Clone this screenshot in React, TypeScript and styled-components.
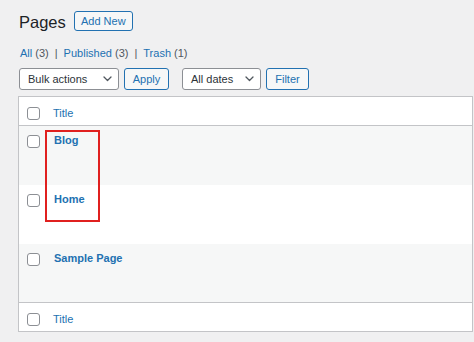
import React from 'react';
import styled, { createGlobalStyle } from 'styled-components';

const GlobalStyle = createGlobalStyle`
  html, body {
    margin: 0;
    padding: 0;
    background: #f0f0f1;
    height: 342px;
    overflow: hidden;
  }
  body {
    font-family: "Liberation Sans", Arial, sans-serif;
    color: #1d2327;
  }
`;

const pages = ['Blog', 'Home', 'Sample Page'];

const Chevron: React.FC = () => (
  <svg width="9" height="6" viewBox="0 0 9 6" fill="none">
    <polyline points="1,1 4.5,4.5 8,1" stroke="#50575e" strokeWidth="1.3" strokeLinecap="round" strokeLinejoin="round" />
  </svg>
);

const App: React.FC = () => {
  return (
    <Wrap>
      <GlobalStyle />
      <HeadingRow>
        <Heading>Pages</Heading>
        <OutlineButton $width={59} $height={20}>Add New</OutlineButton>
      </HeadingRow>

      <FilterLinks>
        <FilterLink>All</FilterLink> <Count>(3)</Count>
        <Sep>|</Sep>
        <FilterLink>Published</FilterLink> <Count>(3)</Count>
        <Sep>|</Sep>
        <FilterLink>Trash</FilterLink> <Count>(1)</Count>
      </FilterLinks>

      <TableNav>
        <Select $width={100}>
          <span>Bulk actions</span>
          <Chevron />
        </Select>
        <OutlineButton $width={45}>Apply</OutlineButton>
        <Select $width={79} $gapLeft={8}>
          <span>All dates</span>
          <Chevron />
        </Select>
        <OutlineButton $width={43}>Filter</OutlineButton>
      </TableNav>

      <Table>
        <HeadRow>
          <CheckCell>
            <Checkbox />
          </CheckCell>
          <ColumnLabel>Title</ColumnLabel>
        </HeadRow>

        {pages.map((title, i) => (
          <BodyRow key={title} $alt={i % 2 === 0} $last={i === pages.length - 1}>
            <CheckCell>
              <Checkbox />
            </CheckCell>
            <RowTitle>{title}</RowTitle>
          </BodyRow>
        ))}

        <FootRow>
          <CheckCell>
            <Checkbox />
          </CheckCell>
          <ColumnLabel>Title</ColumnLabel>
        </FootRow>

        <Highlight />
      </Table>
    </Wrap>
  );
};

const Wrap = styled.div`
  padding: 11px 1px 0 18px;
`;

const HeadingRow = styled.div`
  display: flex;
  align-items: center;
  gap: 8px;
  height: 20px;
`;

const Heading = styled.h1`
  margin: 0 0 0 1px;
  font-size: 16.5px;
  font-weight: 400;
  line-height: 20px;
  color: #1d2327;
  position: relative;
  top: 1px;
`;

const OutlineButton = styled.button<{ $width: number; $height?: number }>`
  box-sizing: border-box;
  height: ${(p) => p.$height || 22}px;
  width: ${(p) => p.$width}px;
  padding: 0;
  border: 1px solid #2271b1;
  border-radius: 3px;
  background: #f6f7f7;
  color: #2271b1;
  font-family: "Liberation Sans", Arial, sans-serif;
  font-size: 11px;
  line-height: 1;
  display: inline-flex;
  align-items: center;
  justify-content: center;
`;

const FilterLinks = styled.div`
  margin: 14px 0 0 2px;
  font-size: 11px;
  line-height: 16px;
  color: #50575e;
  white-space: pre;
`;

const FilterLink = styled.span`
  color: #2271b1;
`;

const Count = styled.span`
  color: #50575e;
`;

const Sep = styled.span`
  color: #50575e;
  margin: 0 6px;
`;

const TableNav = styled.div`
  display: flex;
  align-items: center;
  gap: 5px;
  height: 22px;
  margin-top: 7px;
  padding-left: 1px;
`;

const Select = styled.div<{ $width: number; $gapLeft?: number }>`
  box-sizing: border-box;
  width: ${(p) => p.$width}px;
  height: 22px;
  margin-left: ${(p) => p.$gapLeft || 0}px;
  padding: 0 6px 0 8px;
  display: flex;
  align-items: center;
  justify-content: space-between;
  background: #fff;
  border: 1px solid #8c8f94;
  border-radius: 3px;
  font-size: 11px;
  color: #2c3338;
`;

const Table = styled.div`
  position: relative;
  margin-top: 6px;
  background: #fff;
  border: 1px solid #c3c4c7;
`;

const HeadRow = styled.div`
  display: flex;
  align-items: flex-start;
  height: 29px;
  padding-top: 10px;
  box-sizing: border-box;
  border-bottom: 1px solid #c3c4c7;
`;

const FootRow = styled(HeadRow)`
  border-bottom: none;
  border-top: 1px solid #c3c4c7;
  height: 29px;
`;

const BodyRow = styled.div<{ $alt: boolean; $last: boolean }>`
  display: flex;
  align-items: flex-start;
  box-sizing: border-box;
  height: ${(p) => (p.$last ? 58 : 59)}px;
  padding-top: 9px;
  background: ${(p) => (p.$alt ? '#f6f7f7' : '#fff')};
`;

const CheckCell = styled.div`
  width: 35px;
  padding-left: 8px;
  box-sizing: border-box;
  flex-shrink: 0;
`;

const Checkbox = styled.span`
  display: block;
  width: 13px;
  height: 13px;
  box-sizing: border-box;
  border: 1px solid #8c8f94;
  border-radius: 3px;
  background: #fff;
`;

const ColumnLabel = styled.span`
  font-size: 11px;
  line-height: 13px;
  color: #2271b1;
  margin-left: -1px;
`;

const RowTitle = styled.span`
  font-size: 11px;
  font-weight: 700;
  line-height: 11px;
  color: #2271b1;
`;

const Highlight = styled.div`
  position: absolute;
  left: 26px;
  top: 33px;
  width: 55px;
  height: 92px;
  box-sizing: border-box;
  border: 2px solid #e0201f;
  pointer-events: none;
`;

export default App;
